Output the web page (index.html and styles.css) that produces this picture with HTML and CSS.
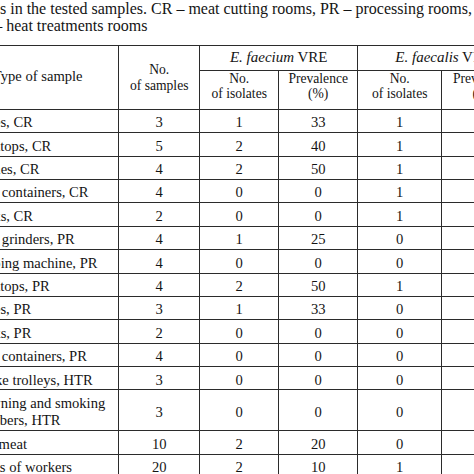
FILE: index.html
```html
<!DOCTYPE html>
<html lang="en">
<head>
<meta charset="utf-8">
<title>VRE isolates table</title>
<link rel="stylesheet" href="styles.css">
</head>
<body>
<div class="crop">
  <div class="sheet">
    <p class="caption">isolates in the tested samples. CR – meat cutting rooms, PR – processing rooms,<br>HTR – heat treatments rooms</p>
    <table class="data">
      <colgroup>
        <col class="c-type"><col class="c-n"><col class="c-a"><col class="c-b"><col class="c-c"><col class="c-d">
      </colgroup>
      <thead>
        <tr class="h1">
          <th rowspan="2" class="type">Type of sample</th>
          <th rowspan="2" class="sub">No.<br>of samples</th>
          <th colspan="2" class="grp"><i>E. faecium</i> VRE</th>
          <th colspan="2" class="grp grp-2"><i>E. faecalis</i> VRE</th>
        </tr>
        <tr class="h2">
          <th class="sub">No.<br>of isolates</th>
          <th class="sub">Prevalence<br>(%)</th>
          <th class="sub">No.<br>of isolates</th>
          <th class="sub">Prevalence<br>(%)</th>
        </tr>
      </thead>
      <tbody>
        <tr><td class="name">Tables, CR</td><td>3</td><td>1</td><td>33</td><td>1</td><td>33</td></tr>
        <tr><td class="name">Worktops, CR</td><td>5</td><td>2</td><td>40</td><td>1</td><td>20</td></tr>
        <tr><td class="name">Clothes, CR</td><td>4</td><td>2</td><td>50</td><td>1</td><td>25</td></tr>
        <tr><td class="name">Meat containers, CR</td><td>4</td><td>0</td><td>0</td><td>1</td><td>25</td></tr>
        <tr><td class="name">Hooks, CR</td><td>2</td><td>0</td><td>0</td><td>1</td><td>50</td></tr>
        <tr><td class="name">Meat grinders, PR</td><td>4</td><td>1</td><td>25</td><td>0</td><td>0</td></tr>
        <tr><td class="name">Clipping machine, PR</td><td>4</td><td>0</td><td>0</td><td>0</td><td>0</td></tr>
        <tr><td class="name">Worktops, PR</td><td>4</td><td>2</td><td>50</td><td>1</td><td>25</td></tr>
        <tr><td class="name">Tables, PR</td><td>3</td><td>1</td><td>33</td><td>0</td><td>0</td></tr>
        <tr><td class="name">Hooks, PR</td><td>2</td><td>0</td><td>0</td><td>0</td><td>0</td></tr>
        <tr><td class="name">Meat containers, PR</td><td>4</td><td>0</td><td>0</td><td>0</td><td>0</td></tr>
        <tr><td class="name">Smoke trolleys, HTR</td><td>3</td><td>0</td><td>0</td><td>0</td><td>0</td></tr>
        <tr class="tall"><td class="name">Browning and smoking<br>chambers, HTR</td><td>3</td><td>0</td><td>0</td><td>0</td><td>0</td></tr>
        <tr><td class="name">Raw meat</td><td>10</td><td>2</td><td>20</td><td>0</td><td>0</td></tr>
        <tr><td class="name">Hands of workers</td><td>20</td><td>2</td><td>10</td><td>1</td><td>5</td></tr>
      </tbody>
    </table>
  </div>
</div>
</body>
</html>
```
FILE: styles.css
```css
html, body {
  margin: 0;
  padding: 0;
  background: #ffffff;
}

body {
  font-family: "Liberation Serif", "Times New Roman", serif;
  color: #141414;
}

.crop {
  width: 474px;
  height: 474px;
  overflow: hidden;
}

.sheet {
  margin-left: -41.8px;
  width: 620px;
}

.caption {
  margin: 0 0 11px;
  padding-top: 1.3px;
  font-size: 16px;
  line-height: 16.5px;
  white-space: nowrap;
}

.data {
  border-collapse: collapse;
  table-layout: fixed;
  width: 565px;
}

.c-type { width: 160px; }
.c-n { width: 81px; }
.c-a { width: 79px; }
.c-b { width: 79px; }
.c-c { width: 84px; }
.c-d { width: 82px; }

.data th,
.data td {
  border: 1px solid #2b2b2b;
  font-weight: normal;
  text-align: center;
  vertical-align: middle;
}

.h1 { height: 24.5px; }
.h2 { height: 38px; }

.h1 th {
  padding: 0 0 2px;
}

.type {
  font-size: 14.6px;
  line-height: 16.5px;
}

.h1 .type {
  padding-right: 2px;
}

.grp {
  font-size: 15px;
  line-height: 16.5px;
  white-space: nowrap;
}

.h1 .grp-2 {
  padding-left: 6px;
}

.sub {
  font-size: 13.6px;
  line-height: 15.5px;
}

.h1 .sub {
  padding: 0;
}

.h2 .sub {
  padding: 0 0 8px;
  line-height: 15px;
}

.data tbody tr {
  height: 23.4px;
}

.data tbody tr.tall {
  height: 41px;
}

.data td {
  font-size: 14.6px;
  line-height: 16.5px;
  padding: 3px 4px 0;
  white-space: nowrap;
}

.data td.name {
  text-align: left;
  padding-left: 9px;
}
```
